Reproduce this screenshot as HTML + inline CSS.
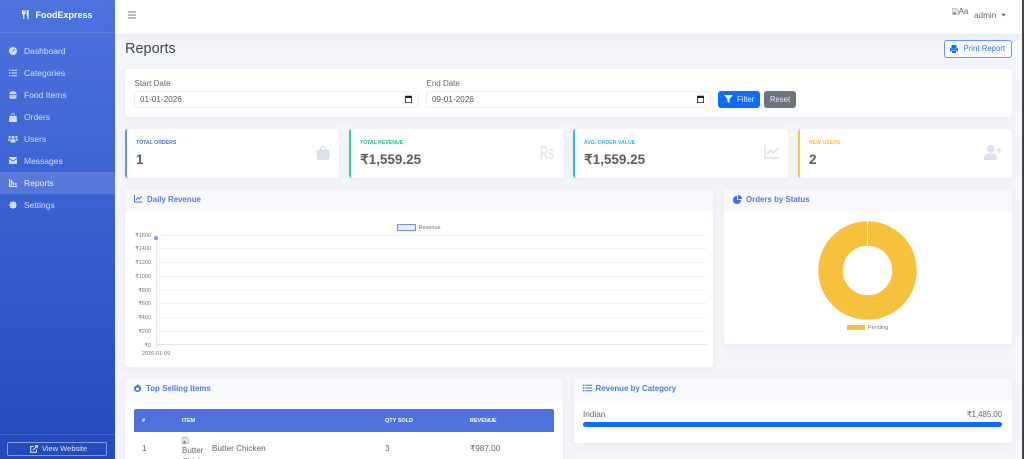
<!DOCTYPE html>
<html lang="en"><head><meta charset="utf-8"><title>Reports</title>
<style>
*{box-sizing:border-box;margin:0;padding:0}
html,body{width:1024px;height:459px;overflow:hidden;background:#f4f6fb}
body{font-family:"Liberation Sans",sans-serif;color:#5a5c69}
#w{position:absolute;left:0;top:0;width:1024px;height:459px;overflow:hidden;filter:blur(.3px)}
.a{position:absolute;white-space:nowrap}
svg{position:absolute;display:block}
#side{left:0;top:0;width:115px;height:459px;background:linear-gradient(180deg,#4e73df 0%,#224abe 100%)}
.nav{position:absolute;left:24px;font-size:8.5px;color:#d5def6;line-height:12px;white-space:nowrap}
.card{position:absolute;background:#fff;border-radius:3px;box-shadow:0 2px 10px rgba(58,59,69,.06)}
.head{position:absolute;left:0;top:0;right:0;height:23px;background:#f8f9fc;border-radius:3px 3px 0 0}
.ttl{position:absolute;font-size:7.900px;font-weight:bold;color:#5579e2;line-height:12px;white-space:nowrap}
.input{position:absolute;height:17px;background:#fff;border:1px solid #eceef2;border-radius:3px;font-size:8px;color:#555;line-height:15px;padding-left:5px;letter-spacing:.1px}
.lbl{font-size:8px;color:#666;line-height:11px}
.stat{position:absolute;top:129px;height:49px;background:#fff;border-radius:3px;border-left:2px solid;box-shadow:0 2px 10px rgba(58,59,69,.06)}
.sl{position:absolute;left:9px;top:9.5px;font-size:5.2px;font-weight:bold;line-height:8px;white-space:nowrap}
.sv{position:absolute;left:9px;top:22px;font-size:13.500px;font-weight:bold;color:#5a5c69;line-height:18px;white-space:nowrap}
.yt{position:absolute;width:26px;text-align:right;left:125px;font-size:5.5px;line-height:7px;color:#777}
.gl{position:absolute;left:156px;width:551px;height:1px;background:#f3f3f5}
.th{position:absolute;top:416.5px;font-size:5.5px;font-weight:bold;color:#fff;line-height:8px}
.td{position:absolute;top:443px;font-size:8.2px;color:#666;line-height:11px;white-space:nowrap}
</style></head><body><div id="w">

<div class="a" id="side"></div>
<div class="a" style="left:0;top:32px;width:115px;height:1px;background:rgba(255,255,255,.12)"></div>
<svg style="left:22px;top:10px" width="9" height="9" viewBox="0 0 9 9" fill="#fff"><path d="M0 0h.8v2.4h.6V0h.8v2.4h.5V0H3.500v3.300C3.500 4 3 4.500 2.300 4.600V9H1.200V4.600C.5 4.500 0 4 0 3.300zM5.500 0H6.600V9H5.500V5.500H4.700V2C4.700 1 5 .3 5.500 0z"/></svg>
<div class="a" style="left:35.500px;top:9px;font-size:9px;font-weight:bold;color:#fff;line-height:12px">FoodExpress</div>

<div class="a" style="left:0;top:172px;width:115px;height:22px;background:rgba(255,255,255,.14)"></div>

<svg style="left:9px;top:47px" width="8" height="8" viewBox="0 0 8 8"><circle cx="4" cy="4" r="4" fill="#d5def6"/><path d="M4 4.500L5.500 2" stroke="#4e73df" stroke-width="1"/></svg>
<div class="nav" style="top:45px">Dashboard</div>
<svg style="left:9px;top:69px" width="8" height="8" viewBox="0 0 8 8" fill="#d5def6"><path d="M0 .5h1.300v1.300H0zM2.300.7H8v1H2.300zM0 3.300h1.300v1.300H0zM2.300 3.500H8v1H2.300zM0 6.100h1.300v1.300H0zM2.300 6.300H8v1H2.300z"/></svg>
<div class="nav" style="top:67px">Categories</div>
<svg style="left:9px;top:91px" width="8" height="8" viewBox="0 0 8 8" fill="#d5def6"><path d="M.5 3C.5 1 2 .3 4 .3S7.500 1 7.500 3zM.3 3.700h7.400v1H.3zM.5 5.300h7v1.200C7.500 7.300 7 7.700 6.500 7.700h-5C1 7.700.5 7.300.5 6.500z"/></svg>
<div class="nav" style="top:89px">Food Items</div>
<svg style="left:9px;top:113px" width="8" height="9" viewBox="0 0 8 9" fill="#d5def6"><path d="M2.300 3V2a1.700 1.700 0 0 1 3.400 0V3H7.500L8 8c0 .6-.4 1-1 1H1C.4 9 0 8.600 0 8L.5 3zM3 3h2V2a1 1 0 0 0-2 0z"/></svg>
<div class="nav" style="top:111px">Orders</div>
<svg style="left:8px;top:135px" width="10" height="8" viewBox="0 0 10 8" fill="#d5def6"><circle cx="5" cy="2.300" r="1.500"/><circle cx="1.700" cy="2" r="1.100"/><circle cx="8.300" cy="2" r="1.100"/><path d="M2.500 7.500V6c0-1.200 1-2 2.500-2s2.500.8 2.500 2v1.500zM0 5.500C0 4.300.7 3.500 1.700 3.500c.4 0 .7.100 1 .3C2.100 4.300 1.800 5 1.800 5.800H0zM10 5.500c0-1.200-.7-2-1.700-2-.4 0-.7.100-1 .3.600.5.900 1.200.9 2H10z"/></svg>
<div class="nav" style="top:133px">Users</div>
<svg style="left:9px;top:157px" width="8" height="7" viewBox="0 0 8 7" fill="#d5def6"><path d="M.7 0h6.600c.4 0 .7.300.7.700v.3L4 3.500 0 1V.7C0 .3.300 0 .7 0zM0 2l4 2.500L8 2v4.300c0 .4-.3.700-.7.700H.7C.3 7 0 6.700 0 6.300z"/></svg>
<div class="nav" style="top:155px">Messages</div>
<svg style="left:9px;top:179px" width="8" height="8" viewBox="0 0 8 8" fill="#e6ecfa"><path d="M0 0h1.200v6.800H8V8H0zM2 1h1.200v4.800H2zM3.800 3H5v2.800H3.800zM5.700 4h2v1.800h-2z"/></svg>
<div class="nav" style="top:177px;color:#eef2fc">Reports</div>
<svg style="left:9px;top:201px" width="8" height="8" viewBox="0 0 8 8"><circle cx="4" cy="4" r="2.400" fill="none" stroke="#d5def6" stroke-width="1.800"/><path d="M4 0v8M0 4h8M1.200 1.200l5.600 5.600M6.800 1.200L1.200 6.800" stroke="#d5def6" stroke-width="1.100"/></svg>
<div class="nav" style="top:199px">Settings</div>

<div class="a" style="left:0;top:434px;width:115px;height:1px;background:rgba(255,255,255,.12)"></div>
<div class="a" style="left:7px;top:442px;width:100px;height:14px;border:1px solid rgba(255,255,255,.45);border-radius:2px"></div>
<svg style="left:30px;top:445px" width="8" height="8" viewBox="0 0 8 8" fill="none" stroke="#e3e9f9" stroke-width="1"><path d="M3.500 1.500H.7v5.800h5.800V4.500M3 5l4-4M4.800.7h2.500v2.500"/></svg>
<div class="a" style="left:42px;top:443px;font-size:7.5px;color:#dfe6f8;line-height:12px">View Website</div>

<div class="a" style="left:115px;top:0;width:907px;height:34px;background:#fff;box-shadow:0 2px 8px rgba(58,59,69,.08)"></div>
<svg style="left:128px;top:11px" width="8" height="8" viewBox="0 0 8 8" fill="#7a7d88"><path d="M0 .5h8v1H0zM0 3.500h8v1H0zM0 6.500h8v1H0z"/></svg>
<svg style="left:952px;top:8px" width="7" height="7" viewBox="0 0 8 8"><path d="M.5.500h5l2 2v5h-7z" fill="#e8e8e8" stroke="#aaa" stroke-width=".6"/><path d="M.8 7L3 4l2 3z" fill="#5a9a50"/></svg>
<div class="a" style="left:958.500px;top:6.500px;font-size:8px;color:#666;line-height:10px">Aa</div>
<div class="a" style="left:974px;top:10px;font-size:8.200px;color:#666;line-height:11px">admin</div>
<svg style="left:1001px;top:13px" width="5" height="4" viewBox="0 0 6 4" fill="#555"><path d="M.5.500h5L3 3.500z"/></svg>

<div class="a" style="left:125px;top:40px;font-size:14.500px;color:#444650;line-height:18px">Reports</div>
<div class="a" style="left:944px;top:40px;width:68px;height:18px;border:1px solid #5f9bff;border-radius:3px;background:#fbfcff"></div>
<svg style="left:950px;top:45px" width="8" height="8" viewBox="0 0 8 8" fill="#0d6efd"><path d="M1.500 0h4L6.500 1v2h-5zM0 3.300h8V6.500H6.500V5h-5v1.500H0zM2 5.500h4V8H2z"/></svg>
<div class="a" style="left:963.500px;top:43px;font-size:7.800px;color:#2f7cf6;line-height:12px">Print Report</div>

<div class="card" style="left:125px;top:69px;width:887px;height:48px"></div>
<div class="a lbl" style="left:134.500px;top:78px">Start Date</div>
<div class="input" style="left:134px;top:91px;width:285px">01-01-2026</div>
<svg style="left:405px;top:95px" width="7" height="8" viewBox="0 0 7 8"><path d="M.4 1.200h6.200v6.400H.4z" fill="#fff" stroke="#222" stroke-width=".8"/><path d="M0 1h7v2H0z" fill="#222"/></svg>
<div class="a lbl" style="left:426.500px;top:78px">End Date</div>
<div class="input" style="left:426px;top:91px;width:285px">09-01-2026</div>
<svg style="left:697px;top:95px" width="7" height="8" viewBox="0 0 7 8"><path d="M.4 1.200h6.200v6.400H.4z" fill="#fff" stroke="#222" stroke-width=".8"/><path d="M0 1h7v2H0z" fill="#222"/></svg>
<div class="a" style="left:718px;top:91px;width:42px;height:17px;background:#0d6efd;border-radius:3px"></div>
<svg style="left:724px;top:95px" width="9" height="8" viewBox="0 0 9 8" fill="#fff"><path d="M0 0h9L5.500 4v4L3.500 6.700V4z"/></svg>
<div class="a" style="left:737px;top:94px;font-size:7.800px;color:#e8f0ff;line-height:11px">Filter</div>
<div class="a" style="left:764px;top:91px;width:32px;height:17px;background:#6c757d;border-radius:3px;font-size:7.800px;color:#e6e8ea;line-height:17px;text-align:center">Reset</div>

<div class="stat" style="left:125px;width:214px;border-color:#6f8fe8"><div class="sl" style="color:#4e73df">TOTAL ORDERS</div><div class="sv">1</div>
<svg style="left:189px;top:16px" width="14" height="15" viewBox="0 0 14 16" fill="#dde1ec"><path d="M4 5V3.500a3 3 0 0 1 6 0V5h2.500c.8 0 1.500.7 1.500 1.500V13c0 1.600-1.200 3-3 3H3c-1.800 0-3-1.400-3-3V6.500C0 5.700.7 5 1.500 5zM5.500 5h3V3.500a1.500 1.500 0 0 0-3 0z"/></svg></div>
<div class="stat" style="left:349px;width:215px;border-color:#3ccf97"><div class="sl" style="color:#1cc88a">TOTAL REVENUE</div><div class="sv">₹1,559.25</div>
<div class="a" style="left:189px;top:14.500px;font-size:18px;color:#dde1ec;line-height:18px;transform:scaleX(.64);transform-origin:left center">Rs</div></div>
<div class="stat" style="left:573px;width:215px;border-color:#36b9cc"><div class="sl" style="color:#36b9cc">AVG. ORDER VALUE</div><div class="sv">₹1,559.25</div>
<svg style="left:189px;top:16px" width="15" height="14" viewBox="0 0 15 14" fill="none" stroke="#dde1ec" stroke-width="1.500"><path d="M1 0v13h14M3 9.500L6.500 5.500l2.500 2.500 5-5"/></svg></div>
<div class="stat" style="left:798px;width:214px;border-color:#f6c55a"><div class="sl" style="color:#f6c23e">NEW USERS</div><div class="sv">2</div>
<svg style="left:184px;top:16px" width="18" height="15" viewBox="0 0 19 16" fill="#dde1ec"><circle cx="7" cy="4" r="4"/><path d="M0 16v-2.500C0 11 2 9 5 9h4c3 0 5 2 5 4.500V16zM15 5V3h1.500v2h2v1.500h-2v2H15v-2h-2V5z"/></svg></div>

<div class="card" style="left:125px;top:189px;width:588px;height:178px"><div class="head"></div></div>
<svg style="left:134px;top:194px" width="9" height="9" viewBox="0 0 9 9" fill="none" stroke="#4e73df" stroke-width="1"><path d="M.5 1v7h8M2 5.800l2-2.200 1.400 1.300L8 2.500"/></svg>
<div class="ttl" style="left:147px;top:194px">Daily Revenue</div>
<div class="a" style="left:397px;top:224px;width:19px;height:7px;background:#e8edfb;border:1px solid #6f8fe8"></div>
<div class="a" style="left:418.500px;top:225px;font-size:5.500px;color:#777;line-height:7px">Revenue</div>
<div class="yt" style="top:232.500px">₹1600</div><div class="gl" style="top:235px"></div>
<div class="yt" style="top:246px">₹1400</div><div class="gl" style="top:248px"></div>
<div class="yt" style="top:260px">₹1200</div><div class="gl" style="top:262px"></div>
<div class="yt" style="top:274px">₹1000</div><div class="gl" style="top:276px"></div>
<div class="yt" style="top:288px">₹800</div><div class="gl" style="top:290px"></div>
<div class="yt" style="top:301px">₹600</div><div class="gl" style="top:303px"></div>
<div class="yt" style="top:315px">₹400</div><div class="gl" style="top:317px"></div>
<div class="yt" style="top:328.500px">₹200</div><div class="gl" style="top:331px"></div>
<div class="yt" style="top:342.500px">₹0</div><div class="gl" style="top:344px;background:#e4e5e8"></div>
<div class="a" style="left:156px;top:235px;width:1px;height:114px;background:#e8e9ec"></div>
<div class="a" style="left:154px;top:236px;width:4px;height:4px;border-radius:50%;background:#7f9be9"></div>
<div class="a" style="left:142px;top:349.500px;font-size:5.500px;color:#777;line-height:8px">2026-01-09</div>

<div class="card" style="left:724px;top:189px;width:288px;height:155px"><div class="head"></div></div>
<svg style="left:733px;top:195px" width="9" height="9" viewBox="0 0 9 9" fill="#4e73df"><path d="M4 .800V5h4.200A4.200 4.200 0 1 1 4 .800zM5 0a4 4 0 0 1 4 4H5z"/></svg>
<div class="ttl" style="left:746px;top:194px">Orders by Status</div>
<svg style="left:818px;top:221px" width="99" height="99" viewBox="0 0 99 99"><circle cx="49.500" cy="49.500" r="37" fill="none" stroke="#f6c23e" stroke-width="24.500"/><path d="M49.500 0v25" stroke="#fff" stroke-width=".8"/></svg>
<div class="a" style="left:847px;top:325px;width:18px;height:5px;background:#f6c23e"></div>
<div class="a" style="left:868px;top:325px;font-size:5.500px;color:#777;line-height:7px">Pending</div>

<div class="card" style="left:125px;top:378px;width:438px;height:90px"><div class="head"></div></div>
<svg style="left:134px;top:384px" width="7" height="8" viewBox="0 0 7 8" fill="#4e73df"><path d="M3.500 0C4 1 5 1 5.500 1.500 6.500 2.500 7 3.500 7 4.500a3.500 3.500 0 0 1-7 0C0 3.300.8 2 2 1.700 2.500 1.500 3.300 1 3.500 0z"/><circle cx="3.500" cy="5" r="1.500" fill="#fff"/></svg>
<div class="ttl" style="left:146px;top:383px">Top Selling Items</div>
<div class="a" style="left:134px;top:409px;width:420px;height:23px;background:#4e73df;border-radius:2px 2px 0 0"></div>
<div class="th" style="left:142px;">#</div>
<div class="th" style="left:182px;">ITEM</div>
<div class="th" style="left:385px;">QTY SOLD</div>
<div class="th" style="left:470px;">REVENUE</div>
<div class="td" style="left:142px">1</div>
<svg style="left:182px;top:437px" width="7" height="7" viewBox="0 0 8 8"><path d="M.5.500h5l2 2v5h-7z" fill="#e8e8e8" stroke="#aaa" stroke-width=".6"/><path d="M.8 7L3 4l2 3z" fill="#5a9a50"/></svg>
<div class="a" style="left:182px;top:445px;font-size:8px;color:#666;line-height:11px;width:24px;overflow:hidden">Butter<br>Chicken</div>
<div class="td" style="left:212px">Butter Chicken</div>
<div class="td" style="left:385px">3</div>
<div class="td" style="left:470px">₹987.00</div>

<div class="card" style="left:574px;top:378px;width:438px;height:65px"><div class="head"></div></div>
<svg style="left:583px;top:384px" width="9" height="8" viewBox="0 0 9 8" fill="#4e73df"><path d="M0 .5h1.500v1.300H0zM2.500.7H9v1H2.500zM0 3.300h1.500v1.300H0zM2.500 3.500H9v1H2.500zM0 6.100h1.500v1.300H0zM2.500 6.300H9v1H2.500z"/></svg>
<div class="ttl" style="left:595.500px;top:383px">Revenue by Category</div>
<div class="a" style="left:583px;top:409px;font-size:8.200px;color:#666;line-height:11px">Indian</div>
<div class="a" style="right:22px;top:409px;font-size:7.800px;color:#666;line-height:11px">₹1,485.00</div>
<div class="a" style="left:583px;top:422px;width:419px;height:5px;background:#0d6efd;border-radius:3px"></div>

<div class="a" style="left:1022px;top:0;width:2px;height:459px;background:#444"></div>
</div></body></html>
